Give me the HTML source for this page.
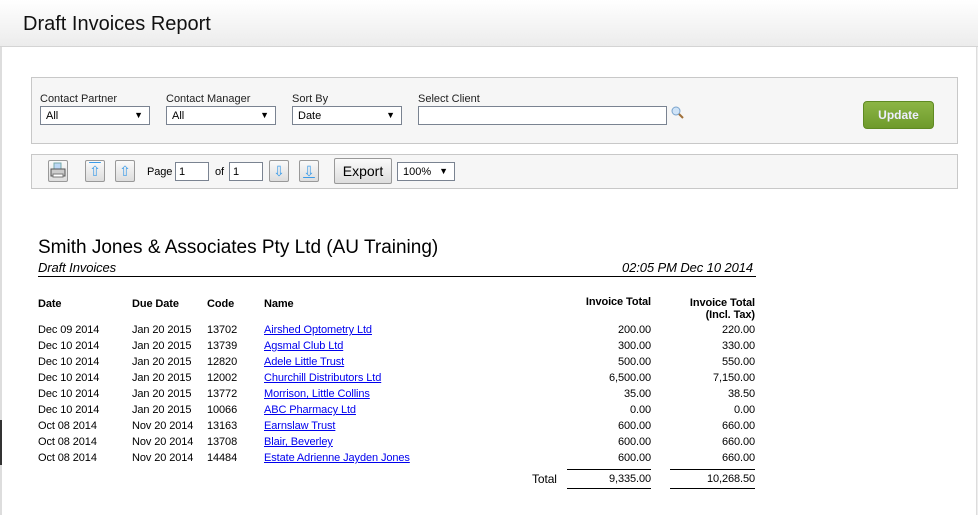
<!DOCTYPE html>
<html><head><meta charset="utf-8"><style>
*{margin:0;padding:0;box-sizing:border-box}
body{width:978px;height:515px;background:#fff;font-family:"Liberation Sans",Arial,sans-serif;position:relative;overflow:hidden;color:#000}
.a{position:absolute}
#hdr{left:0;top:0;width:978px;height:47px;background:linear-gradient(#fff,#ececec);border-bottom:1px solid #d4d4d4}
#hdr span{position:absolute;left:23px;top:13px;font-size:20px;color:#111}
.panel{background:#f6f6f6;border:1px solid #c8c8c8}
.lbl{font-size:11px;color:#222}
.sel{height:19px;border:1px solid #7a8391;background:#fff;font-size:11px;padding:3px 0 0 5px}
.sel:after{content:"▼";position:absolute;right:6px;top:3px;font-size:9px}
.btn{border:1px solid #999;background:linear-gradient(#fafafa,#ddd);border-radius:2px}
.t{font-size:11px;white-space:nowrap;letter-spacing:-0.1px}
.r{text-align:right}
a{color:#00e;text-decoration:underline}
.b{font-weight:bold}
</style></head><body>
<div id="hdr" class="a"><span>Draft Invoices Report</span></div>
<div class="a" style="left:0;top:47px;width:2px;height:468px;background:#ddd"></div>
<div class="a" style="left:0;top:420px;width:2px;height:45px;background:#333"></div>
<div class="a" style="left:976px;top:47px;width:2px;height:468px;background:#eee;border-left:1px solid #ddd"></div>

<div class="a panel" style="left:31px;top:77px;width:927px;height:67px"></div>
<div class="a lbl" style="left:40px;top:93px">Contact Partner</div>
<div class="a sel" style="left:40px;top:106px;width:110px">All</div>
<div class="a lbl" style="left:166px;top:93px">Contact Manager</div>
<div class="a sel" style="left:166px;top:106px;width:110px">All</div>
<div class="a lbl" style="left:292px;top:93px">Sort By</div>
<div class="a sel" style="left:292px;top:106px;width:110px">Date</div>
<div class="a lbl" style="left:418px;top:93px">Select Client</div>
<div class="a" style="left:418px;top:106px;width:249px;height:19px;border:1px solid #7a8391;background:#fff"></div>
<svg class="a" style="left:670px;top:106px" width="16" height="14"><circle cx="6" cy="5" r="4" fill="#cfe3f7" stroke="#7aa3cc"/><line x1="9" y1="8" x2="13" y2="12" stroke="#a0703a" stroke-width="2"/></svg>
<div class="a" style="left:863px;top:101px;width:71px;height:28px;background:linear-gradient(#8cb545,#6e9a2c);border:1px solid #5f8a22;border-radius:4px;color:#eef;font-weight:bold;font-size:12px;text-align:center;line-height:26px">Update</div>

<div class="a panel" style="left:31px;top:154px;width:927px;height:35px"></div>
<div class="a btn" style="left:48px;top:160px;width:20px;height:22px"></div>
<svg class="a" style="left:49px;top:162px" width="18" height="18"><rect x="5" y="1" width="7" height="7" fill="#bcd7f5" stroke="#7aa"/><rect x="2" y="7" width="14" height="7" fill="#ccc" stroke="#555"/><rect x="4" y="12" width="10" height="3" fill="#fff" stroke="#777"/></svg>
<div class="a btn" style="left:85px;top:160px;width:20px;height:22px;color:#3b9be8;text-align:center;font-size:14px;line-height:20px;text-decoration:overline">⇧</div>
<div class="a btn" style="left:115px;top:160px;width:20px;height:22px;color:#3b9be8;text-align:center;font-size:14px;line-height:20px">⇧</div>
<div class="a t" style="left:147px;top:166px">Page</div>
<div class="a" style="left:175px;top:162px;width:34px;height:19px;border:1px solid #7a8391;background:#fff;font-size:11px;padding:3px 3px">1</div>
<div class="a t" style="left:215px;top:166px">of</div>
<div class="a" style="left:229px;top:162px;width:34px;height:19px;border:1px solid #7a8391;background:#fff;font-size:11px;padding:3px 3px">1</div>
<div class="a btn" style="left:269px;top:160px;width:20px;height:22px;color:#3b9be8;text-align:center;font-size:14px;line-height:20px">⇩</div>
<div class="a btn" style="left:299px;top:160px;width:20px;height:22px;color:#3b9be8;text-align:center;font-size:14px;line-height:20px;text-decoration:underline">⇩</div>
<div class="a btn" style="left:334px;top:158px;width:58px;height:26px;font-size:14px;text-align:center;line-height:24px">Export</div>
<div class="a sel" style="left:397px;top:162px;width:58px;height:19px">100%</div>

<div class="a" style="left:38px;top:237px;font-size:19px;white-space:nowrap">Smith Jones &amp; Associates Pty Ltd (AU Training)</div>
<div class="a t" style="left:38px;top:260px;font-size:13px;font-style:italic">Draft Invoices</div>
<div class="a t" style="left:622px;top:260px;font-size:13px;font-style:italic">02:05 PM Dec 10 2014</div>
<div class="a" style="left:38px;top:276px;width:718px;height:1px;background:#000"></div>

<div class="a t b" style="left:38px;top:298px">Date</div>
<div class="a t b" style="left:132px;top:298px">Due Date</div>
<div class="a t b" style="left:207px;top:298px">Code</div>
<div class="a t b" style="left:264px;top:298px">Name</div>
<div class="a t b r" style="left:551px;top:296px;width:100px">Invoice Total</div>
<div class="a t b r" style="left:655px;top:297px;width:100px;line-height:12px">Invoice Total<br>(Incl. Tax)</div>

<div class="a" style="left:0;top:324px">
<div class="a t" style="left:38px;top:0">Dec 09 2014</div><div class="a t" style="left:132px;top:0">Jan 20 2015</div><div class="a t" style="left:207px;top:0">13702</div><a class="a t" style="left:264px;top:0">Airshed Optometry Ltd</a><div class="a t r" style="left:551px;top:0;width:100px">200.00</div><div class="a t r" style="left:655px;top:0;width:100px">220.00</div>
<div class="a t" style="left:38px;top:16px">Dec 10 2014</div><div class="a t" style="left:132px;top:16px">Jan 20 2015</div><div class="a t" style="left:207px;top:16px">13739</div><a class="a t" style="left:264px;top:16px">Agsmal Club Ltd</a><div class="a t r" style="left:551px;top:16px;width:100px">300.00</div><div class="a t r" style="left:655px;top:16px;width:100px">330.00</div>
<div class="a t" style="left:38px;top:32px">Dec 10 2014</div><div class="a t" style="left:132px;top:32px">Jan 20 2015</div><div class="a t" style="left:207px;top:32px">12820</div><a class="a t" style="left:264px;top:32px">Adele Little Trust</a><div class="a t r" style="left:551px;top:32px;width:100px">500.00</div><div class="a t r" style="left:655px;top:32px;width:100px">550.00</div>
<div class="a t" style="left:38px;top:48px">Dec 10 2014</div><div class="a t" style="left:132px;top:48px">Jan 20 2015</div><div class="a t" style="left:207px;top:48px">12002</div><a class="a t" style="left:264px;top:48px">Churchill Distributors Ltd</a><div class="a t r" style="left:551px;top:48px;width:100px">6,500.00</div><div class="a t r" style="left:655px;top:48px;width:100px">7,150.00</div>
<div class="a t" style="left:38px;top:64px">Dec 10 2014</div><div class="a t" style="left:132px;top:64px">Jan 20 2015</div><div class="a t" style="left:207px;top:64px">13772</div><a class="a t" style="left:264px;top:64px">Morrison, Little Collins</a><div class="a t r" style="left:551px;top:64px;width:100px">35.00</div><div class="a t r" style="left:655px;top:64px;width:100px">38.50</div>
<div class="a t" style="left:38px;top:80px">Dec 10 2014</div><div class="a t" style="left:132px;top:80px">Jan 20 2015</div><div class="a t" style="left:207px;top:80px">10066</div><a class="a t" style="left:264px;top:80px">ABC Pharmacy Ltd</a><div class="a t r" style="left:551px;top:80px;width:100px">0.00</div><div class="a t r" style="left:655px;top:80px;width:100px">0.00</div>
<div class="a t" style="left:38px;top:96px">Oct 08 2014</div><div class="a t" style="left:132px;top:96px">Nov 20 2014</div><div class="a t" style="left:207px;top:96px">13163</div><a class="a t" style="left:264px;top:96px">Earnslaw Trust</a><div class="a t r" style="left:551px;top:96px;width:100px">600.00</div><div class="a t r" style="left:655px;top:96px;width:100px">660.00</div>
<div class="a t" style="left:38px;top:112px">Oct 08 2014</div><div class="a t" style="left:132px;top:112px">Nov 20 2014</div><div class="a t" style="left:207px;top:112px">13708</div><a class="a t" style="left:264px;top:112px">Blair, Beverley</a><div class="a t r" style="left:551px;top:112px;width:100px">600.00</div><div class="a t r" style="left:655px;top:112px;width:100px">660.00</div>
<div class="a t" style="left:38px;top:128px">Oct 08 2014</div><div class="a t" style="left:132px;top:128px">Nov 20 2014</div><div class="a t" style="left:207px;top:128px">14484</div><a class="a t" style="left:264px;top:128px">Estate Adrienne Jayden Jones</a><div class="a t r" style="left:551px;top:128px;width:100px">600.00</div><div class="a t r" style="left:655px;top:128px;width:100px">660.00</div>
</div>

<div class="a" style="left:567px;top:469px;width:84px;height:1px;background:#000"></div>
<div class="a" style="left:670px;top:469px;width:85px;height:1px;background:#000"></div>
<div class="a t" style="left:532px;top:472px;font-size:12px">Total</div>
<div class="a t r" style="left:551px;top:473px;width:100px">9,335.00</div>
<div class="a t r" style="left:655px;top:473px;width:100px">10,268.50</div>
<div class="a" style="left:567px;top:488px;width:84px;height:1px;background:#000"></div>
<div class="a" style="left:670px;top:488px;width:85px;height:1px;background:#000"></div>
</body></html>
